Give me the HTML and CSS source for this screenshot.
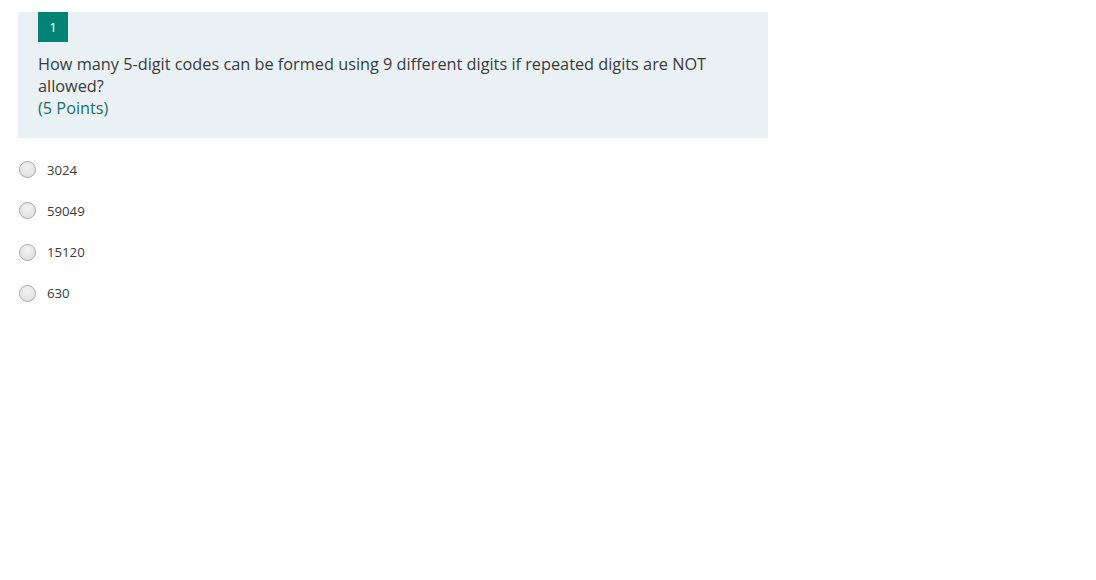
FILE: index.html
```html
<!DOCTYPE html>
<html>
<head>
<meta charset="utf-8">
<link rel="stylesheet" href="styles.css">
</head>
<body>
<div class="page">
  <div class="question">
    <div class="badge">1</div>
    <div class="qtext">How many 5-digit codes can be formed using 9 different digits if repeated digits are NOT allowed?</div>
    <div class="points">(5 Points)</div>
  </div>
  <div class="options">
    <label class="option"><span class="radio"></span><span class="label">3024</span></label>
    <label class="option"><span class="radio"></span><span class="label">59049</span></label>
    <label class="option"><span class="radio"></span><span class="label">15120</span></label>
    <label class="option"><span class="radio"></span><span class="label">630</span></label>
  </div>
</div>
</body>
</html>
```

FILE: styles.css
```css
html, body {
  margin: 0;
  padding: 0;
  background: #fff;
}
body {
  font-family: "Open Sans", "Noto Sans", "Liberation Sans", sans-serif;
  color: #333;
}
.page {
  padding: 12px 0 0 18px;
  width: 750px;
}
.question {
  background: #e9f1f4;
  padding: 0 40px 19px 20px;
}
.badge {
  width: 30px;
  height: 30px;
  background: #038373;
  color: #fff;
  font-size: 13.5px;
  line-height: 30px;
  text-align: center;
}
.qtext {
  margin-top: 11px;
  font-size: 16.3px;
  line-height: 22px;
  color: #3a3a3a;
}
.points {
  font-size: 16.3px;
  line-height: 22px;
  color: #1f6e6a;
}
.options {
  display: flex;
  flex-direction: column;
  padding-top: 23px;
  gap: 24.3px;
}
.option {
  display: flex;
  align-items: center;
  height: 17px;
}
.radio {
  width: 15px;
  height: 15px;
  border: 1px solid #a9a9a9;
  border-radius: 50%;
  background: radial-gradient(circle at 50% 35%, #f2f2f2, #dcdcdc);
  box-sizing: content-box;
  margin-left: 1px;
}
.label {
  margin-left: 11px;
  font-size: 13.2px;
  color: #3a3a3a;
}
```
